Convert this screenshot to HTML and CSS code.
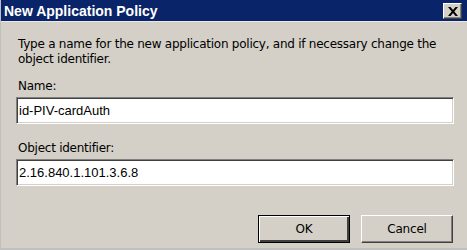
FILE: index.html
```html
<!DOCTYPE html>
<html lang="en">
<head>
    <meta charset="UTF-8">
    <title>New Application Policy</title>
    <link rel="stylesheet" href="styles.css">
</head>
<body>
    <div class="window">
        <div class="titlebar">
            <span class="title">New Application Policy</span>
            <button class="close" type="button">
                <svg width="10" height="9" viewBox="0 0 10 9">
                    <path d="M0 0h2.5l2.5 3 2.5-3H10L6.3 4.5 10 9H7.5L5 6 2.5 9H0l3.7-4.5z" fill="#000"/>
                </svg>
            </button>
        </div>

        <form class="content">
            <p class="intro">Type a name for the new application policy, and if necessary change the object identifier.</p>

            <div class="form-group">
                <label for="name">Name:</label>
                <input type="text" id="name" value="id-PIV-cardAuth">
            </div>

            <div class="form-group oid">
                <label for="oid">Object identifier:</label>
                <input type="text" id="oid" value="2.16.840.1.101.3.6.8">
            </div>

            <div class="buttons">
                <button type="submit" class="btn default">OK</button>
                <button type="button" class="btn">Cancel</button>
            </div>
        </form>
    </div>
</body>
</html>
```

FILE: styles.css
```css
* {
    box-sizing: border-box;
}

body {
    margin: 0;
    background-color: #d4d0c8;
    font-family: "DejaVu Sans", Verdana, sans-serif;
    font-size: 12px;
    letter-spacing: -0.25px;
    color: #000;
}

.window {
    width: 467px;
    height: 250px;
    border-left: 1px solid #c0c0c0;
    border-bottom: 2px solid #c0c0c0;
    background-color: #d4d0c8;
}

.titlebar {
    height: 22px;
    background-color: #0a246a;
    border-bottom: 1px solid #ece9e4;
    display: flex;
    align-items: center;
    justify-content: space-between;
    padding: 0 5px 0 3px;
}

.title {
    color: #fff;
    font-family: "Liberation Sans", Arial, sans-serif;
    font-weight: bold;
    font-size: 14px;
    letter-spacing: 0;
}

.close {
    width: 19px;
    height: 16px;
    padding: 0;
    margin-top: 1px;
    background-color: #d4d0c8;
    border: 1px solid;
    border-color: #fff #404040 #404040 #fff;
    box-shadow: inset -1px -1px #808080;
    display: flex;
    align-items: center;
    justify-content: center;
}

.content {
    padding: 15px 14px 0 15px;
    margin: 0;
}

.intro {
    margin: 0;
    padding-left: 2px;
    line-height: 15px;
}

.form-group {
    margin-top: 12px;
}

.form-group.oid {
    margin-top: 17px;
}

label {
    display: block;
    padding-left: 2px;
    line-height: 15px;
    margin-bottom: 3px;
}

input {
    display: block;
    width: 438px;
    height: 27px;
    padding: 0 2px;
    font-family: "Liberation Sans", Arial, sans-serif;
    font-size: 13px;
    letter-spacing: 0;
    background: #fff;
    border: 1px solid;
    border-color: #808080 #fff #fff #808080;
    box-shadow: inset 1px 1px #404040, inset -1px -1px #d4d0c8;
    outline: none;
}

.buttons {
    display: flex;
    justify-content: flex-end;
    gap: 11px;
    margin-top: 29px;
}

.btn {
    width: 92px;
    height: 28px;
    padding: 0;
    font-family: inherit;
    font-size: 12px;
    letter-spacing: -0.2px;
    color: #000;
    background-color: #d4d0c8;
    border: 1px solid;
    border-color: #fff #404040 #404040 #fff;
    box-shadow: inset -1px -1px #808080;
}

.btn.default {
    border: 1px solid #000;
    box-shadow: inset 1px 1px #fff, inset -2px -2px #404040, inset -1px -1px #808080;
}
```
